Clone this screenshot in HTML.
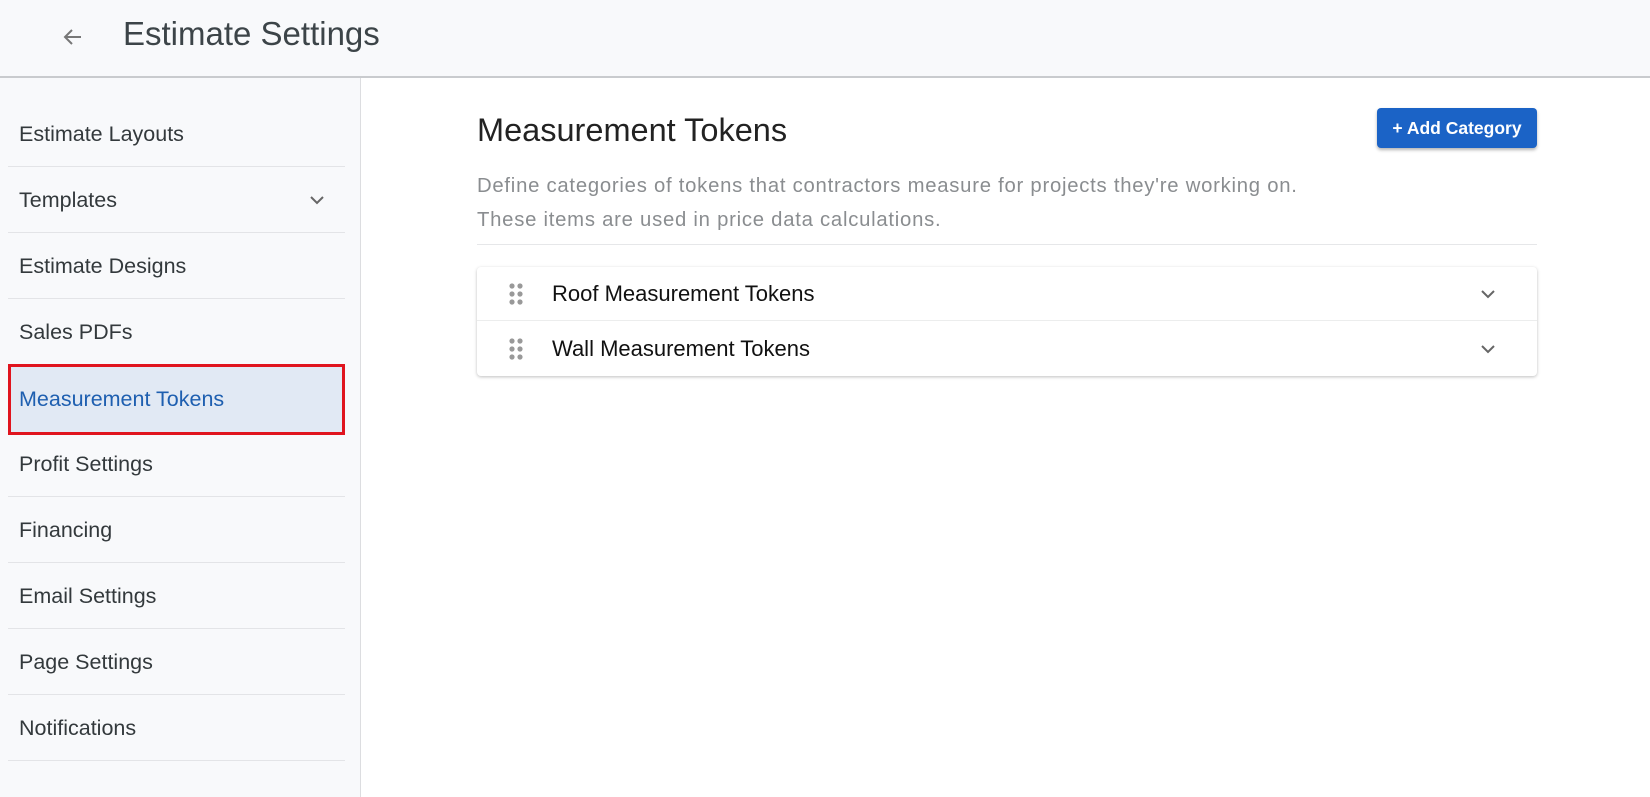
<!DOCTYPE html>
<html><head><style>
*{margin:0;padding:0;box-sizing:border-box}
body{width:1650px;height:797px;background:#fff;font-family:"Liberation Sans",Arial,sans-serif;position:relative;overflow:hidden}
.hdr{position:absolute;left:0;top:0;width:1650px;height:78px;background:#f8f9fb;border-bottom:2px solid #c9cbce}
.hdr .t{position:absolute;left:123px;top:15px;font-size:33px;color:#3c4448}
.side{position:absolute;left:0;top:78px;width:361px;height:719px;background:#f8f9fb;border-right:1px solid #dcdde0}
.item{position:absolute;left:8px;width:337px;height:66px;border-bottom:1px solid #e3e4e7;font-size:21.5px;color:#33393c;padding-left:11px;line-height:66px}
.sel{position:absolute;left:8px;top:364px;width:337px;height:71px;background:#e1e9f4;border:3px solid #e0141e;color:#1e5fb0;font-size:21.5px;padding-left:8px;line-height:64px}
.main h1{position:absolute;left:477px;top:112px;font-size:32.5px;font-weight:normal;color:#222}
.btn{position:absolute;left:1377px;top:108px;width:160px;height:40px;background:#1b63c6;color:#fff;border-radius:4px;font-size:17.5px;font-weight:bold;text-align:center;line-height:40px;box-shadow:0 2px 3px rgba(0,0,0,.3)}
.desc{position:absolute;left:477px;top:169px;font-size:20.3px;letter-spacing:0.75px;color:#8a8d90;line-height:34px}
.hr{position:absolute;left:477px;top:244px;width:1060px;height:1px;background:#e6e7e9}
.card{position:absolute;left:477px;top:267px;width:1060px;height:109px;background:#fff;border-radius:4px;box-shadow:0 1px 3px rgba(0,0,0,.25)}
.row{position:absolute;left:0;width:1060px;height:54px;font-size:22px;color:#111;line-height:54px;padding-left:75px}
.dots{position:absolute;left:31px;top:15px}
.chev{position:absolute;left:1002px;top:18px}
</style></head><body>
<div class="hdr">
<svg style="position:absolute;left:61px;top:25px" width="24" height="24" viewBox="0 0 24 24"><path d="M20 12H5M11 5l-7 7 7 7" stroke="#777" stroke-width="2" fill="none"/></svg>
<div class="t">Estimate Settings</div></div>
<div class="side">
<div class="item" style="top:23px">Estimate Layouts</div>
<div class="item" style="top:89px">Templates<svg style="position:absolute;left:300px;top:24px" width="18" height="18" viewBox="0 0 18 18"><path d="M3 6l6 6 6-6" stroke="#666" stroke-width="2" fill="none"/></svg></div>
<div class="item" style="top:155px">Estimate Designs</div>
<div class="item" style="top:221px;border-bottom:none">Sales PDFs</div>
<div class="item" style="top:353px">Profit Settings</div>
<div class="item" style="top:419px">Financing</div>
<div class="item" style="top:485px">Email Settings</div>
<div class="item" style="top:551px">Page Settings</div>
<div class="item" style="top:617px">Notifications</div>
</div>
<div class="sel">Measurement Tokens</div>
<div class="main">
<h1>Measurement Tokens</h1>
<div class="btn">+ Add Category</div>
<div class="desc">Define categories of tokens that contractors measure for projects they're working on.<br>These items are used in price data calculations.</div>
<div class="hr"></div>
<div class="card">
<div class="row" style="top:0;border-bottom:1px solid #eceded">Roof Measurement Tokens
<svg class="dots" width="16" height="24" viewBox="0 0 16 24"><g fill="#999"><circle cx="4" cy="4" r="2.6"/><circle cx="12" cy="4" r="2.6"/><circle cx="4" cy="12" r="2.6"/><circle cx="12" cy="12" r="2.6"/><circle cx="4" cy="20" r="2.6"/><circle cx="12" cy="20" r="2.6"/></g></svg>
<svg class="chev" width="18" height="18" viewBox="0 0 18 18"><path d="M3 6l6 6 6-6" stroke="#666" stroke-width="2" fill="none"/></svg></div>
<div class="row" style="top:55px">Wall Measurement Tokens
<svg class="dots" width="16" height="24" viewBox="0 0 16 24"><g fill="#999"><circle cx="4" cy="4" r="2.6"/><circle cx="12" cy="4" r="2.6"/><circle cx="4" cy="12" r="2.6"/><circle cx="12" cy="12" r="2.6"/><circle cx="4" cy="20" r="2.6"/><circle cx="12" cy="20" r="2.6"/></g></svg>
<svg class="chev" width="18" height="18" viewBox="0 0 18 18"><path d="M3 6l6 6 6-6" stroke="#666" stroke-width="2" fill="none"/></svg></div>
</div></div>
</body></html>
